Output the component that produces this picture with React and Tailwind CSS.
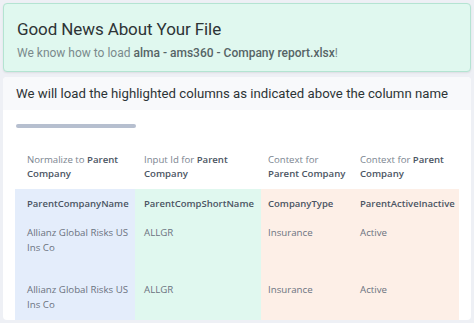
import React from "react";

const heading = { fontFamily: "Roboto, 'Noto Sans', sans-serif" };
const sub = { fontFamily: "Roboto, 'Noto Sans', sans-serif" };
const body = { fontFamily: "'Open Sans', 'Noto Sans', sans-serif" };

function HeadCell({ children, className = "" }) {
  return (
    <div className={`whitespace-nowrap pt-[6px] pb-[8px] text-[9.6px] leading-[14px] text-[#7b8590] ${className}`}>
      {children}
    </div>
  );
}

function B({ children }) {
  return <span className="font-semibold text-[#4b5563]">{children}</span>;
}

const cols = "grid grid-cols-[120px_126px_91px_107px]";

function DataRow({ name }) {
  return (
    <div className={`${cols} h-[57px] whitespace-nowrap text-[9.7px] leading-[15px] text-[#6b7280]`}>
      <div className="bg-[#e4edfb] pl-[12px] pt-[7px]">{name[0]}<br />{name[1]}</div>
      <div className="bg-[#e0f8ef] pl-[9px] pt-[7px]">ALLGR</div>
      <div className="bg-[#fdefe7] pl-[7px] pt-[7px]">Insurance</div>
      <div className="bg-[#fdefe7] pl-[8px] pt-[7px]">Active</div>
    </div>
  );
}

export default function App() {
  return (
    <div className="w-[474px] h-[323px] overflow-hidden bg-[#eef0f5] p-[3px] flex flex-col gap-[5px]">
      <div className="h-[69px] shrink-0 rounded-[4px] border border-[#b4e4d2] bg-[#e0f8ef] shadow-[0_1px_2px_rgba(0,0,0,0.08)] px-[13px] pt-[13px]" >
        <div style={heading} className="text-[17px] leading-[24px] font-normal text-[#2d3436] tracking-[-0.1px] whitespace-nowrap">
          Good News About Your File
        </div>
        <div style={sub} className="mt-[3px] text-[12px] leading-[18px] text-[#7a8a8c] whitespace-nowrap">
          We know how to load <span className="font-medium text-[#566466]">alma - ams360 - Company report.xlsx</span>!
        </div>
      </div>
      <div className="flex-1 rounded-[4px] bg-white flex flex-col overflow-hidden">
        <div className="h-[33px] shrink-0 bg-[#f8f9fb] px-[13px] flex items-center">
          <div style={heading} className="text-[13.2px] text-[#2d3436] font-normal whitespace-nowrap">
            We will load the highlighted columns as indicated above the column name
          </div>
        </div>
        <div className="px-[12px]">
          <div className="ml-[1px] mt-[14px] h-[4px] w-[120px] rounded-full bg-[#b6bfcf]" />
          <div style={body} className="mt-[19px]">
            <div className={cols}>
              <HeadCell className="pl-[12px]">Normalize to <B>Parent</B><br /><B>Company</B></HeadCell>
              <HeadCell className="pl-[9px]">Input Id for <B>Parent</B><br /><B>Company</B></HeadCell>
              <HeadCell className="pl-[7px]">Context for<br /><B>Parent Company</B></HeadCell>
              <HeadCell className="pl-[8px]">Context for <B>Parent</B><br /><B>Company</B></HeadCell>
            </div>
            <div className={`${cols} h-[29px] whitespace-nowrap text-[9.5px] leading-[14px] font-semibold text-[#4b5563]`}>
              <div className="bg-[#e4edfb] pl-[12px] pt-[8px]">ParentCompanyName</div>
              <div className="bg-[#e0f8ef] pl-[9px] pt-[8px]">ParentCompShortName</div>
              <div className="bg-[#fdefe7] pl-[7px] pt-[8px]">CompanyType</div>
              <div className="bg-[#fdefe7] pl-[8px] pt-[8px]">ParentActiveInactive</div>
            </div>
            <DataRow name={["Allianz Global Risks US", "Ins Co"]} />
            <DataRow name={["Allianz Global Risks US", "Ins Co"]} />
          </div>
        </div>
      </div>
    </div>
  );
}
